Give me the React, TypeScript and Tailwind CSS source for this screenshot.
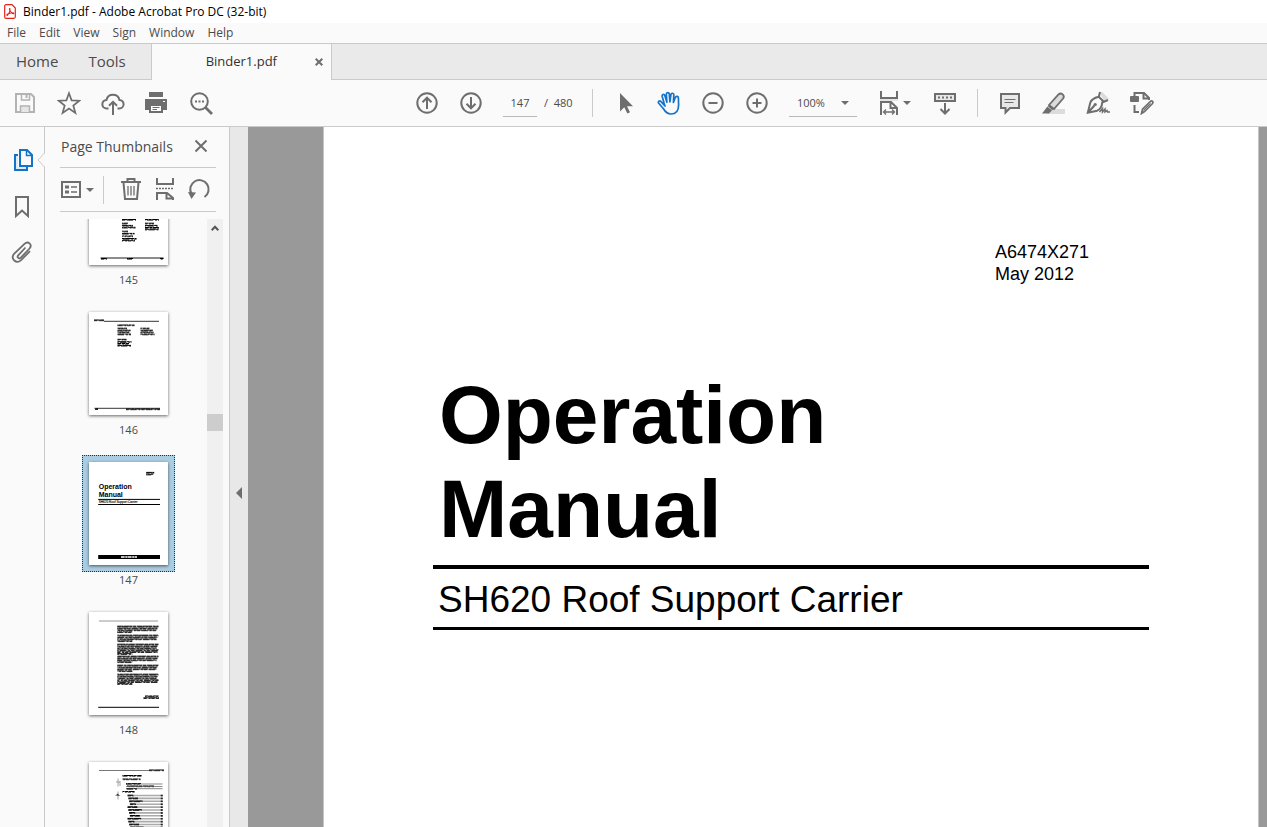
import React from 'react';

type IconProps = { children: React.ReactNode; className?: string };

const Icon = ({ children, className = 'text-[#6e6e6e]' }: IconProps) => (
  <svg
    viewBox="0 0 24 24"
    className={`h-6 w-6 shrink-0 ${className}`}
    fill="none"
    stroke="currentColor"
    strokeWidth="2"
    aria-hidden="true"
  >
    {children}
  </svg>
);

const Caret = () => (
  <svg viewBox="0 0 8 4" className="h-1 w-2 shrink-0" fill="#6e6e6e" aria-hidden="true">
    <path d="M0 0h8L4 4z" />
  </svg>
);

const fileTools = [
  {
    label: 'Save',
    className: 'text-[#b3b3b3]',
    icon: (
      <>
        <path d="M3 3h15l3 3v15H3z" />
        <path d="M8.500 3v6h8V3" strokeWidth="1.500" />
        <path d="M13.500 4v3" />
        <path d="M7.500 21v-6h9v6" fill="#e6e6e6" strokeWidth="1.500" />
      </>
    ),
  },
  {
    label: 'Star',
    icon: <path d="M12 2.200l2.600 7.200 7.700.300-6 4.800 2.100 7.400L12 17.600l-6.400 4.300 2.100-7.400-6-4.800 7.700-.300z" strokeWidth="1.700" />,
  },
  {
    label: 'Share',
    icon: (
      <>
        <path d="M7.500 17.500H5.800a4.300 4.300 0 0 1-.3-8.600 6.600 6.600 0 0 1 12.900 0 4.300 4.300 0 0 1-.2 8.600h-1.700" />
        <path d="M12 24V11M8 14.800l4-4 4 4" />
      </>
    ),
  },
  {
    label: 'Print',
    icon: (
      <>
        <path d="M4 1h14v5H4zM0 8h22v11h-4v-5H4v5H0z" fill="currentColor" stroke="none" />
        <path d="M5 14h12v7H5z" fill="#fff" />
        <path d="M7.500 16.500h7M7.500 18.500h4.500" strokeWidth="1" />
        <path d="M18 10.500h2" stroke="#fff" strokeWidth="1" />
      </>
    ),
  },
  {
    label: 'Find',
    icon: (
      <>
        <circle cx="10.500" cy="10.500" r="8.300" />
        <path d="M16.500 16.500l6.500 6.500" strokeWidth="2.600" />
        <path d="M6 10.500h2M9.500 10.500h2M13 10.500h2" />
      </>
    ),
  },
];

const pageTools = [
  { label: 'Previous page', icon: <><circle cx="12" cy="12" r="9.700" /><path d="M12 18V7M7.500 11.200L12 6.700l4.500 4.500" /></> },
  { label: 'Next page', icon: <><circle cx="12" cy="12" r="9.700" /><path d="M12 6v11M7.500 12.800l4.500 4.500 4.500-4.500" /></> },
];

const viewTools = [
  { label: 'Select', icon: <path d="M7 2v18.500l4.300-4.200 3 6.200 2.700-1.300-3-6H20z" fill="currentColor" stroke="none" /> },
  {
    label: 'Hand',
    className: 'text-[#1473c8]',
    icon: (
      <path
        d="M7.300 13L5.200 5.400c-.5-2.100 2-2.700 2.600-.8l2.100 6.700L9.300 3.200c0-2.100 2.800-2.200 3-.1l.6 7.900 1-7.400c.3-2 3-1.700 2.900.3l-.4 7.600 1.900-5c.7-1.900 3.300-1.200 3.100.8L21.600 14c0 5.500-2.600 9-7.600 9-4 0-5.700-2-7.700-5.500l-4.600-5.300c-1-1.700.8-3 2.300-1.600l4 4.400z"
        strokeWidth="1.700"
        strokeLinejoin="round"
      />
    ),
  },
  { label: 'Zoom out', icon: <><circle cx="12" cy="12" r="9.700" /><path d="M7.500 12h9" /></> },
  { label: 'Zoom in', icon: <><circle cx="12" cy="12" r="9.700" /><path d="M7.500 12h9M12 7.500v9" /></> },
];

const markupTools = [
  {
    label: 'Add comment',
    icon: (
      <>
        <path d="M3 3h18v14h-9l-4.500 4.500V17H3z" fill="#e8e8e8" />
        <path d="M6.500 8.500h11M6.500 11.500h9" strokeWidth="1.200" />
      </>
    ),
  },
  {
    label: 'Highlight',
    icon: (
      <>
        <path d="M9 18h14v5H5z" fill="#dcdcdc" stroke="none" />
        <path d="M7 14L16.500 3.500c2.700-2.600 6.800.8 4.600 4L12 18z" fill="#dcdcdc" strokeWidth="1.800" />
        <path d="M6.500 14.500l4.500 4M2 21.500l3.500-4.500 3 2.500-2 2z" fill="currentColor" />
      </>
    ),
  },
  {
    label: 'Sign',
    icon: (
      <>
        <path d="M13.500 1h3L23 8l-5 2z" fill="#dcdcdc" stroke="none" />
        <path d="M14 1l-1.200 4.800C7.500 7 5 9 4.200 12L1.800 21.700l9.400-2c3.300-1.500 4.800-4.500 5-8.200L22 9M12.500 5.500l5 5M2 21.500l6.500-7" />
        <circle cx="9.200" cy="13.500" r="1.600" fill="currentColor" stroke="none" />
        <path d="M13.500 21l3-3.500V21l2.500-3v3l2-1.500.5 1.500H24" strokeWidth="1.500" />
      </>
    ),
  },
  {
    label: 'Edit',
    icon: (
      <>
        <path d="M4.500 5V2h9.500l5 5v2M13.500 2v5.500H19M4.500 14v7H9" />
        <rect x="0" y="5" width="9" height="6" rx="1" fill="currentColor" stroke="none" />
        <path d="M11.500 22.500l1-4.200 8-8c1.500-1 3.200.600 2 2.200l-8 8z" fill="#fafafa" strokeWidth="1.700" />
        <path d="M13.500 19.500l7-7" strokeWidth="1" />
      </>
    ),
  },
];

type Tool = { label: string; icon: React.ReactNode; className?: string };

const ToolButtons = ({ tools }: { tools: Tool[] }) => (
  <div className="flex">
    {tools.map((tool) => (
      <button key={tool.label} type="button" aria-label={tool.label} className="flex h-11 w-11 items-center justify-center">
        <Icon className={tool.className}>{tool.icon}</Icon>
      </button>
    ))}
  </div>
);

const Divider = () => <div className="h-7 w-px shrink-0 bg-[#cacaca]" />;

// Rows of tiny print: x, y, width in tenths of a thumbnail pixel
const Print = ({ rows }: { rows: number[][] }) => (
  <>
    {rows.map(([x, y, w], i) => (
      <g key={i} stroke="#000">
        <path d={`M${x} ${y}h${w}`} strokeWidth="10" strokeDasharray="57 4 92 5 31 6" strokeDashoffset={(i * 47) % 150} />
        <path d={`M${x} ${y + 7}h${w}`} strokeWidth="8" strokeDasharray="33 14 64 19 19 9" strokeDashoffset={(i * 61) % 130} />
      </g>
    ))}
  </>
);

const paragraphs = [
  [142, 4], [232, 4], [322, 6], [442, 4], [532, 4], [622, 6],
].flatMap(([top, count]) =>
  Array.from({ length: count }, (_, i) => [283, top + i * 19, i === count - 1 ? 90 + (top % 5) * 30 : 412 - (i % 3) * 10]),
);

const addressRows = [
  [285, 130, 170], [285, 162, 95], [285, 182, 130], [285, 201, 120], [285, 221, 135],
  [515, 162, 90], [515, 182, 125], [515, 201, 130], [515, 221, 140],
  [285, 273, 90], [285, 297, 140], [285, 315, 115], [285, 334, 135],
];

// The last page is only partly in view, so it carries no label
const thumbnails = [
  {
    page: 145,
    label: '145',
    art: (
      <>
        <Print
          rows={[
            [330, 575, 140], [330, 612, 60], [330, 634, 110], [330, 653, 135],
            [330, 692, 60], [330, 714, 125], [330, 740, 110], [330, 765, 145], [330, 783, 130],
            [560, 575, 140], [560, 612, 90], [560, 634, 130], [560, 655, 140], [560, 672, 135],
          ]}
        />
        <path d="M115 960h630" stroke="#000" strokeWidth="9" />
        <Print rows={[[120, 965, 60], [380, 965, 60], [710, 965, 35]]} />
      </>
    ),
  },
  {
    page: 146,
    label: '146',
    art: (
      <>
        <path d="M150 93h550M55 963h655" stroke="#000" strokeWidth="8" />
        <Print rows={[[50, 80, 100], ...addressRows, [60, 968, 30], [370, 970, 340]]} />
      </>
    ),
  },
  {
    page: 147,
    label: '147',
    art: (
      <g fontFamily="Liberation Sans, Arial, sans-serif">
        <Print rows={[[572, 104, 80], [572, 122, 70]]} />
        <g fontSize="70" fontWeight="700">
          <text x="97" y="270">Operation</text>
          <text x="97" y="350">Manual</text>
        </g>
        <path d="M92 374h618M92 425h618" stroke="#000" strokeWidth="10" />
        <text x="97" y="412" fontSize="31" stroke="#000" strokeWidth="1">SH620 Roof Support Carrier</text>
        <path d="M92 950h618" stroke="#000" strokeWidth="40" />
        <path d="M320 950h160" stroke="#fff" strokeWidth="16" strokeDasharray="37 6 22 4" />
      </g>
    ),
  },
  {
    page: 148,
    label: '148',
    art: (
      <>
        <path d="M100 90h590" stroke="#999" strokeWidth="10" />
        <Print rows={[...paragraphs, [560, 840, 140], [545, 858, 155]]} />
        <path d="M92 953h608" stroke="#000" strokeWidth="10" />
      </>
    ),
  },
  {
    page: 149,
    label: '',
    art: (
      <>
        <path d="M100 85h500" stroke="#777" strokeWidth="12" />
        <Print rows={[[600, 80, 150], [335, 135, 190], [335, 170, 180], [370, 215, 150], [380, 240, 270], [375, 265, 110], [335, 295, 120]]} />
        {Array.from({ length: 16 }, (_, i) => (
          <g key={i}>
            <path d={`M${390 + (i % 4) * 8} ${335 + i * 29}H735`} stroke="#aaa" strokeWidth="16" />
            <Print rows={[[385 + (i % 4) * 8, 332 + i * 29, 60 + ((i * 37) % 110)], [718, 332 + i * 29, 20]]} />
          </g>
        ))}
        <path d="M370 220h365M370 245h365M370 267h365" stroke="#555" strokeWidth="7" />
        <path d="M290 165v80M270 200h40M290 295v80M265 335h45M310 190v50" stroke="#999" strokeWidth="9" />
        <path d="M270 330l20-15 12 25z" fill="#333" />
      </>
    ),
  },
];

const Header = () => (
  <header>
    <div className="flex h-[23px] items-center gap-[7px] bg-white pl-1">
      <svg viewBox="0 0 12 15" className="h-[15px] w-3" fill="none" stroke="#e2231a" aria-hidden="true">
        <path d="M2 .7h6l3.300 3.300v8.800c0 1-.5 1.500-1.500 1.500H2c-.8 0-1.300-.5-1.300-1.300V2C.7 1.200 1.200.7 2 .7z" strokeWidth="1.200" />
        <path d="M5.800 4.500c-.9 0 .1 3 2.800 5 1.500.7 1.700-.7.3-.8-2.200 0-4.100.6-5.600 1.600-1 .8-.4 1.700.4.700C4.800 9.500 6.400 6.500 5.800 4.500z" strokeWidth="1.100" />
      </svg>
      <h1 className="text-[12px] leading-4 text-black">Binder1.pdf - Adobe Acrobat Pro DC (32-bit)</h1>
    </div>
    <nav className="flex h-5 items-center gap-[13px] bg-[#fafafa] pl-[7px] text-[12px] leading-4 text-[#4b4b4b]">
      {['File', 'Edit', 'View', 'Sign', 'Window', 'Help'].map((item) => (
        <button key={item} type="button">{item}</button>
      ))}
    </nav>
    <div className="flex h-[37px] border-y border-[#cacaca] bg-[#eaeaea] text-[#4b4b4b]">
      <div className="flex w-[151px] gap-[30px] pl-4 text-[15px]">
        <button type="button">Home</button>
        <button type="button">Tools</button>
      </div>
      <div className="-mb-px flex w-[181px] items-center justify-end gap-[38px] border-x border-[#cacaca] bg-[#fafafa] pr-2">
        <span className="text-[13px] text-[#323232]">Binder1.pdf</span>
        <button type="button" aria-label="Close tab">
          <svg viewBox="0 0 8 8" className="h-2 w-2" stroke="#6e6e6e" strokeWidth="2" aria-hidden="true">
            <path d="M.7.7l6.600 6.600M7.300.7L.7 7.300" />
          </svg>
        </button>
      </div>
    </div>
  </header>
);

const Toolbar = () => (
  <div className="flex h-[47px] shrink-0 items-center border-b border-[#cacaca] bg-[#fafafa] pl-[3px] text-[11px] text-[#4b4b4b]">
    <ToolButtons tools={fileTools} />
    <div className="ml-[182px] flex items-center">
      <ToolButtons tools={pageTools} />
      <input
        aria-label="Page number"
        defaultValue="147"
        className="ml-[10px] h-7 w-[34px] border-b border-[#b9b9b9] bg-transparent text-center outline-none"
      />
      <span className="ml-[7px] w-[48px]">/&nbsp; 480</span>
      <Divider />
      <div className="ml-[10px]">
        <ToolButtons tools={viewTools} />
      </div>
      <div className="relative ml-[10px] flex items-center">
        <select aria-label="Zoom level" className="h-7 w-[68px] appearance-none border-b border-[#b9b9b9] bg-transparent pl-2 pt-[2px] outline-none">
          <option>100%</option>
        </select>
        <span className="pointer-events-none absolute right-2"><Caret /></span>
      </div>
      <button type="button" aria-label="Fit width" className="ml-5 flex h-11 items-center gap-[2px]">
        <Icon>
          <path d="M3 7.500h18v2.500H3z" fill="#e4e4e4" stroke="none" />
          <path d="M4 0v7h16V0M4 24V11h10l6 6v7M13.500 11v6H20" />
          <path d="M7 21h10M9 18.500L6.500 21 9 23.500M15 18.500l2.500 2.500-2.500 2.500" strokeWidth="1.300" />
        </Icon>
        <Caret />
      </button>
      <button type="button" aria-label="Scrolling pages" className="ml-3 mr-[10px] flex h-11 w-11 items-center justify-center">
        <Icon>
          <path d="M2 3h20v7H2z" fill="#e8e8e8" />
          <path d="M5 6.500h14" strokeDasharray="2 2" />
          <path d="M12 12v10M7.500 18l4.500 4.500 4.500-4.500" />
        </Icon>
      </button>
      <Divider />
      <div className="ml-[10px]">
        <ToolButtons tools={markupTools} />
      </div>
    </div>
  </div>
);

const NavRail = () => (
  <nav className="relative flex w-[45px] shrink-0 flex-col items-center gap-[22px] border-r border-[#cacaca] bg-[#fafafa] pt-[21px]">
    <button type="button" aria-label="Page thumbnails">
      <Icon className="text-[#1473c8]">
        <path d="M5 8h3v11h9v3H5z" fill="#dcebf8" stroke="none" />
        <path d="M8 7H5v15h12v-3" />
        <path d="M10 2h7l5 5v11H10z" fill="#fafafa" />
        <path d="M16.500 2v5.500H22" strokeWidth="1.500" />
      </Icon>
    </button>
    <button type="button" aria-label="Bookmarks">
      <Icon><path d="M6 3h12v19l-6-5.500L6 22z" /></Icon>
    </button>
    <button type="button" aria-label="Attachments">
      <Icon>
        <path d="M15.500 7.500l-7.300 7.800c-1.700 2 .8 4.200 2.600 2.400l8.700-9.200c3.300-4-1.500-8-5-4.700L4.300 13.500c-4.500 5.500 2.200 11 6.800 6.600l8.900-9" strokeWidth="1.800" />
      </Icon>
    </button>
    <svg viewBox="0 0 8 14" className="absolute -right-px top-[26px] h-[14px] w-2" aria-hidden="true">
      <path d="M8 0L1 7l7 7z" fill="#fafafa" />
      <path d="M7.500 0L1 7l6.500 7" fill="none" stroke="#cacaca" />
    </svg>
  </nav>
);

const ThumbnailPanel = () => (
  <aside className="flex w-[185px] shrink-0 flex-col border-r border-[#cacaca] bg-[#fafafa]">
    <div className="ml-[15px] mr-[13px] flex h-[41px] items-center justify-between border-b border-[#cacaca] pb-[2px] pl-px pr-2">
      <h2 className="text-[14px] text-[#4b4b4b]">Page Thumbnails</h2>
      <button type="button" aria-label="Close panel">
        <svg viewBox="0 0 14 14" className="h-[14px] w-[14px]" stroke="#6e6e6e" strokeWidth="2" aria-hidden="true">
          <path d="M1.500 1.500l11 11M12.500 1.500l-11 11" />
        </svg>
      </button>
    </div>
    <div className="ml-[15px] mr-[13px] flex h-11 items-center border-b border-[#cacaca]">
      <button type="button" aria-label="Options" className="flex items-center gap-1">
        <svg viewBox="0 0 22 24" className="h-6 w-[22px]" fill="none" stroke="#6e6e6e" strokeWidth="2" aria-hidden="true">
          <path d="M2 4h18v15H2z" />
          <path d="M5 9h4M5 14h4" strokeWidth="3" />
          <path d="M11 9h6M11 14h6" strokeWidth="1.700" />
        </svg>
        <Caret />
      </button>
      <div className="ml-[9px] mr-[15px]"><Divider /></div>
      <div className="flex gap-[10px] pb-[2px]">
        <button type="button" aria-label="Delete pages">
          <Icon>
            <path d="M2 5h20M8.500 5V2h7v3M4.500 5.500L6 22h12l1.500-16.500" />
            <path d="M9 9v9.500M12 9v9.500M15 9v9.500" strokeWidth="1.300" />
          </Icon>
        </button>
        <button type="button" aria-label="Split">
          <Icon>
            <path d="M4 1v6h16V1M4 23v-7h10l6 5v2M13.500 16v5.500H20" />
            <path d="M3 11.500h18" strokeWidth="1.700" strokeDasharray="2 1" />
          </Icon>
        </button>
        <button type="button" aria-label="Rotate">
          <Icon>
            <path d="M4.500 17A9.200 9.200 0 1 1 17.500 20" />
            <path d="M1 15l8 .5-4.500 6.500z" fill="currentColor" stroke="none" />
          </Icon>
        </button>
      </div>
    </div>
    <div className="mt-[7px] flex min-h-0 flex-1 pr-[6px]">
      <div className="flex-1 overflow-hidden pl-[37px]">
        {/* scrolled part way through page 145 */}
        <ul className="-mt-16 flex flex-col gap-[17px]">
          {thumbnails.map((thumb) => (
            <li key={thumb.page} className="w-[93px]">
              <div
                className={
                  thumb.page === 147
                    ? 'border border-dotted border-[#3a2a2a] bg-[#abcde2] py-[6px] pl-[6px]'
                    : 'border border-transparent py-[6px] pl-[6px]'
                }
              >
                <svg
                  viewBox="0 0 790 1030"
                  className="h-[103px] w-[79px] bg-white shadow-[0_1px_3px_rgba(0,0,0,0.6)]"
                  role="img"
                  aria-label={`Thumbnail of page ${thumb.page}`}
                >
                  {thumb.art}
                </svg>
              </div>
              {thumb.label && (
                <p className="text-center text-[11px] leading-4 text-[#4b4b4b]">{thumb.label}</p>
              )}
            </li>
          ))}
        </ul>
      </div>
      <div className="flex w-4 shrink-0 flex-col items-center bg-[#f0f0f0]">
        <button type="button" aria-label="Scroll up" className="flex h-[18px] items-center">
          <svg viewBox="0 0 8 6" className="h-[6px] w-2" fill="none" stroke="#555" strokeWidth="2" aria-hidden="true">
            <path d="M.7 5.200L4 1.700l3.300 3.500" />
          </svg>
        </button>
        <div className="mt-[177px] h-[17px] w-full bg-[#cdcdcd]" />
      </div>
    </div>
  </aside>
);

const Document = () => (
  <main className="flex min-w-0 flex-1 overflow-hidden bg-[#999999] pl-[75px] pr-2">
    <article className="flex-1 border-x border-[#c4c4c4] bg-white px-[109px] pt-[114px] font-['Liberation_Sans',Arial,sans-serif] text-black">
      <p className="ml-auto w-[154px] text-[18px] leading-[22px]">
        A6474X271
        <br />
        May 2012
      </p>
      <h2 className="mt-[83px] pl-[6px] text-[82px] font-bold leading-[94px]">
        Operation
        <br />
        Manual
      </h2>
      <p className="mt-[9px] border-b-[3px] border-t-4 border-black pl-[5px] pt-[4px] text-[37px] leading-[54px]">
        SH620 Roof Support Carrier
      </p>
    </article>
  </main>
);

const App = () => {
  return (
    <div className="flex h-screen flex-col overflow-hidden bg-[#fafafa] font-['Open_Sans','Noto_Sans',sans-serif]">
      <Header />
      <Toolbar />
      <div className="flex min-h-0 flex-1">
        <NavRail />
        <ThumbnailPanel />
        <button type="button" aria-label="Collapse panel" className="flex w-[18px] shrink-0 items-center justify-center bg-[#e8e8e8] pt-8">
          <svg viewBox="0 0 6 12" className="h-3 w-[6px]" fill="#6e6e6e" aria-hidden="true">
            <path d="M6 0v12L0 6z" />
          </svg>
        </button>
        <Document />
      </div>
    </div>
  );
};

export default App;
